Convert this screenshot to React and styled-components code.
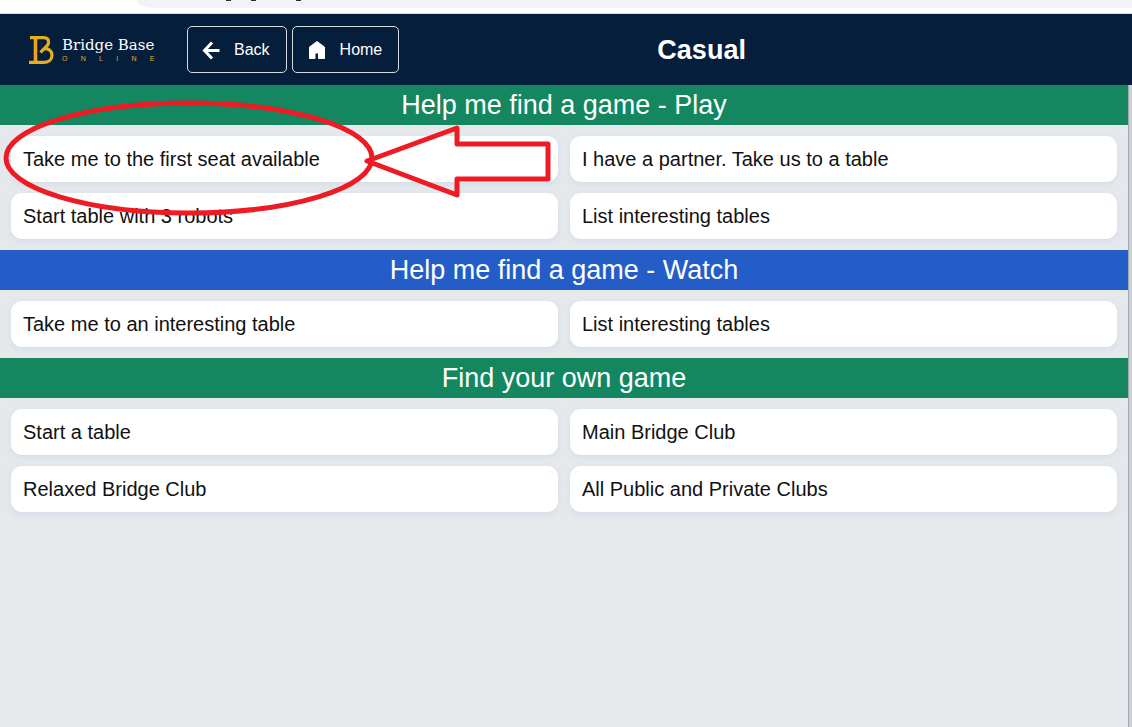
import React from 'react';
import styled, { createGlobalStyle } from 'styled-components';

const colors = {
    navy: '#041e3c',
    green: '#148761',
    blue: '#245dc7',
    page: '#e5e9ec',
    gold: '#e3b022',
    marker: '#ed1c24',
};

const GlobalStyle = createGlobalStyle`
    * {
        box-sizing: border-box;
    }

    body {
        margin: 0;
        background: ${colors.page};
        font-family: 'Liberation Sans', Arial, sans-serif;
    }
`;

const Page = styled.div`
    position: relative;
    display: flex;
    flex-direction: column;
    min-height: 100vh;
`;

const BrowserStrip = styled.div`
    height: 14px;
    padding-left: 137px;
    background: white;
    border-bottom: 1px solid #d9dcdf;
`;

const AddressBar = styled.div`
    height: 8px;
    padding-left: 88px;
    background: #f1f3f4;
    border-bottom-left-radius: 16px 8px;

    svg {
        display: block;
    }
`;

const Header = styled.header`
    display: flex;
    align-items: center;
    height: 71px;
    padding: 0 128px 0 28px;
    background: ${colors.navy};
    color: white;
`;

const Logo = styled.a`
    display: flex;
    align-items: center;
    gap: 8px;
    width: 159px;
    color: white;
    text-decoration: none;
`;

const LogoName = styled.div`
    font-family: 'DejaVu Serif', serif;
    font-size: 15px;
    line-height: 18px;
    white-space: nowrap;
`;

const LogoTag = styled.div`
    display: flex;
    justify-content: space-between;
    color: ${colors.gold};
    font-size: 7px;
    line-height: 10px;
`;

const NavButtons = styled.nav`
    display: flex;
    gap: 5px;
`;

const NavButton = styled.button`
    display: flex;
    align-items: center;
    gap: 12px;
    height: 47px;
    padding: 0 16px 0 12px;
    background: transparent;
    border: 1px solid #d5dae0;
    border-radius: 5px;
    color: white;
    font-family: inherit;
    font-size: 16px;
    line-height: 20px;
`;

const Title = styled.h1`
    flex: 1;
    margin: 0;
    font-size: 27px;
    line-height: 32px;
    text-align: center;
`;

const Lobby = styled.main`
    flex: 1;
    margin-right: 3px;
    border-right: 1px solid #a4a9af;
    box-shadow: 3px 0 0 #ccd1d8;
`;

const Banner = styled.h2`
    margin: 0;
    background: ${({ $color }) => $color};
    color: white;
    font-size: 27px;
    font-weight: 400;
    line-height: 40px;
    text-align: center;
`;

const Options = styled.div`
    display: grid;
    grid-template-columns: 1fr 1fr;
    gap: 11px 12px;
    padding: 11px;
`;

const Option = styled.button`
    height: 46px;
    padding: 0 12px;
    background: white;
    border: 0;
    border-radius: 11px;
    box-shadow: 0 2px 6px #d3dbe6;
    color: #111;
    font-family: inherit;
    font-size: 20px;
    line-height: 24px;
    text-align: left;
`;

const Marker = styled.svg`
    position: absolute;
    top: 96px;
    left: 0;
    pointer-events: none;
`;

const sections = [
    {
        title: 'Help me find a game - Play',
        color: colors.green,
        options: [
            'Take me to the first seat available',
            'I have a partner. Take us to a table',
            'Start table with 3 robots',
            'List interesting tables',
        ],
    },
    {
        title: 'Help me find a game - Watch',
        color: colors.blue,
        options: ['Take me to an interesting table', 'List interesting tables'],
    },
    {
        title: 'Find your own game',
        color: colors.green,
        options: ['Start a table', 'Main Bridge Club', 'Relaxed Bridge Club', 'All Public and Private Clubs'],
    },
];

function LogoMark() {
    return (
        <svg width="26" height="30" viewBox="0 0 26 30" fill="none" stroke={colors.gold} strokeWidth="3.2">
            <path d="M7.5 3V27" stroke="#eda11f" strokeWidth="3.6" />
            <path d="M2 2.6H15.5C19 2.6 20.6 4.6 20.6 7.2C20.6 10.5 18 12 15.5 14.2L12.5 17.5" />
            <path d="M1 27.4H15.5C20.5 27.4 24 24.5 24 20.3C24 16 21 13.4 16 13.6" />
        </svg>
    );
}

function BackIcon() {
    return (
        <svg width="22" height="22" viewBox="0 0 22 22" fill="none" stroke="white" strokeWidth="3">
            <path d="M12 3.5L4.5 11.5L12 19.5M4.5 11.5H19.5" />
        </svg>
    );
}

function HomeIcon() {
    return (
        <svg width="23" height="22" viewBox="0 0 23 22" fill="white">
            <path d="M12 2.5L4.5 8V19.5H10V14H13.5V19.5H19.5V8Z" stroke="white" strokeLinejoin="round" />
        </svg>
    );
}

function App() {
    return (
        <Page>
            <GlobalStyle />
            <BrowserStrip>
                <AddressBar>
                    <svg width="92" height="2" fill="#2b2b3a">
                        <path d="M1 0H6V1H1ZM26 0H31V1H26ZM71 0H76V1H71Z" />
                    </svg>
                </AddressBar>
            </BrowserStrip>
            <Header>
                <Logo href="#">
                    <LogoMark />
                    <div>
                        <LogoName>Bridge Base</LogoName>
                        <LogoTag>
                            {[...'ONLINE'].map((letter, i) => (
                                <span key={i}>{letter}</span>
                            ))}
                        </LogoTag>
                    </div>
                </Logo>
                <NavButtons>
                    <NavButton type="button">
                        <BackIcon />
                        Back
                    </NavButton>
                    <NavButton type="button">
                        <HomeIcon />
                        Home
                    </NavButton>
                </NavButtons>
                <Title>Casual</Title>
            </Header>
            <Lobby>
                {sections.map(({ title, color, options }) => (
                    <section key={title}>
                        <Banner $color={color}>{title}</Banner>
                        <Options>
                            {options.map((option) => (
                                <Option type="button" key={option}>{option}</Option>
                            ))}
                        </Options>
                    </section>
                ))}
            </Lobby>
            <Marker
                width="560"
                height="124"
                fill="none"
                stroke={colors.marker}
                strokeWidth="5"
                strokeLinejoin="round"
                aria-hidden="true"
            >
                <ellipse cx="189" cy="62" rx="183" ry="55" />
                <path d="M367 65L457 32V48H548V83H457V99Z" />
            </Marker>
        </Page>
    );
}

export default App;
